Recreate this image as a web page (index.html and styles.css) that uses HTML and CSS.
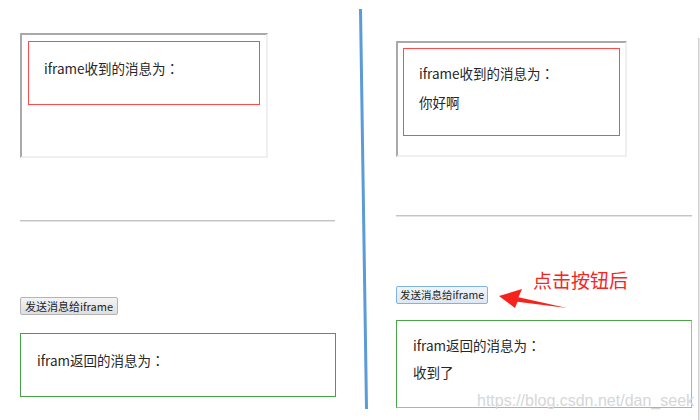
FILE: index.html
```html
<!DOCTYPE html>
<html lang="zh-CN">
<head>
<meta charset="utf-8">
<title>postMessage demo</title>
<link rel="stylesheet" href="styles.css">
</head>
<body>
<div class="page">
  <section class="col col-left">
    <div class="frame frame-left">
      <div class="msg msg-left">
        <p class="line">iframe收到的消息为<span class="colon" lang="zh-TW">：</span></p>
      </div>
    </div>
    <hr class="rule rule-left">
    <div class="btn-row btn-row-left">
      <button class="send send-left">发送消息给iframe</button>
    </div>
    <div class="reply reply-left">
      <p class="line">ifram返回的消息为<span class="colon" lang="zh-TW">：</span></p>
    </div>
  </section>

  <div class="divider">
    <svg width="60" height="420" viewBox="0 0 60 420">
      <line x1="24.5" y1="9" x2="30.5" y2="409" stroke="#5b9bd7" stroke-width="3"/>
    </svg>
  </div>

  <section class="col col-right">
    <div class="frame frame-right">
      <div class="msg msg-right">
        <p class="line">iframe收到的消息为<span class="colon" lang="zh-TW">：</span></p>
        <p class="line line-gap">你好啊</p>
      </div>
    </div>
    <hr class="rule rule-right">
    <div class="btn-row btn-row-right">
      <button class="send send-right">发送消息给iframe</button>
      <span class="note">点击按钮后</span>
      <svg class="arrow" width="80" height="30" viewBox="100 0 80 30">
        <polygon points="103,10 126,3 122.5,11.3 171,22 121.5,15.8 119,22" fill="#f5231c"/>
      </svg>
    </div>
    <div class="reply reply-right">
      <p class="line">ifram返回的消息为<span class="colon" lang="zh-TW">：</span></p>
      <p class="line line-gap2">收到了</p>
      <span class="watermark">https://blog.csdn.net/dan_seek</span>
    </div>
  </section>

  <div class="edge"></div>
</div>
</body>
</html>
```

FILE: styles.css
```css
* { box-sizing: border-box; }

html, body {
  margin: 0;
  padding: 0;
  background: #ffffff;
}

body {
  width: 700px;
  height: 420px;
  overflow: hidden;
  font-family: "Noto Sans CJK SC", "Noto Sans", sans-serif;
  font-size: 13.5px;
  color: #262626;
}

.page {
  display: flex;
  align-items: flex-start;
  padding-left: 20px;
  height: 420px;
}

.col {
  display: flex;
  flex-direction: column;
  align-items: flex-start;
}

.col-left { width: 316px; }
.col-right { width: 296px; }

.divider {
  width: 60px;
  height: 420px;
  flex: none;
}
.divider svg { display: block; }

.edge {
  margin-left: 6px;
  margin-top: 38px;
  width: 2px;
  height: 382px;
  background: #e6e6e6;
  border-left: 1px solid #d2d2d2;
}

/* iframe box */
.frame {
  border-style: solid;
  border-width: 2px;
  border-color: #a9a9a9 #efefef #efefef #a9a9a9;
  background: #fff;
}
.frame-left {
  margin-top: 33px;
  width: 248px;
  height: 125px;
  padding: 6px;
}
.frame-right {
  margin-top: 41px;
  width: 231px;
  height: 116px;
  padding: 5px;
}

.msg {
  border: 1px solid #ff4b4b;
  padding: 0 15px;
}
.msg-left {
  width: 232px;
  height: 64px;
  padding-top: 16px;
}
.msg-right {
  width: 217px;
  height: 88px;
  padding-top: 14px;
}

.line {
  margin: 0;
  line-height: 20px;
  white-space: nowrap;
}
.colon {
  font-family: "Noto Sans CJK TC", "Noto Sans CJK SC", sans-serif;
}
.line-gap { margin-top: 9px; }
.line-gap2 { margin-top: 7px; }

/* horizontal rule */
.rule {
  margin: 0;
  border: none;
  height: 2px;
  border-top: 1px solid #c4c4c4;
  border-bottom: 1px solid #e4e4e4;
}
.rule-left {
  margin-top: 62px;
  width: 315px;
}
.rule-right {
  margin-top: 58px;
  width: 296px;
}

/* buttons */
.btn-row {
  position: relative;
  display: flex;
  align-items: center;
}
.btn-row-left { margin-top: 75px; }
.btn-row-right { margin-top: 69px; }

.send {
  height: 18px;
  padding: 0;
  font-family: "Noto Sans CJK SC", "Noto Sans", sans-serif;
  color: #1e1e1e;
  border-radius: 2px;
  line-height: 16px;
  text-align: center;
  white-space: nowrap;
}
.send-left {
  width: 98px;
  font-size: 11px;
  border: 1px solid #b4b4b4;
  background: linear-gradient(#f4f4f4, #dedede);
}
.send-right {
  width: 92px;
  font-size: 10.5px;
  border: 1px solid #7fb2e6;
  background: linear-gradient(#eef5fc, #dce8f4);
}

.note {
  position: absolute;
  left: 137px;
  top: -16px;
  font-size: 19px;
  line-height: 20px;
  color: #f6261f;
  white-space: nowrap;
}
.arrow {
  position: absolute;
  left: 100px;
  top: 0;
}

/* reply box */
.reply {
  position: relative;
  border: 1px solid #46a046;
  padding: 0 16px;
}
.reply-left {
  margin-top: 18px;
  width: 316px;
  height: 64px;
  padding-top: 16px;
}
.reply-right {
  margin-top: 16px;
  width: 296px;
  height: 88px;
  padding-top: 14px;
  border-color: #4aa44a #8cc98c #8cc98c #4aa44a;
}

.watermark {
  position: absolute;
  left: 80px;
  top: 72px;
  font-family: "Liberation Sans", Arial, sans-serif;
  font-size: 16px;
  line-height: 16px;
  color: #d6d6d6;
  white-space: nowrap;
}
```
